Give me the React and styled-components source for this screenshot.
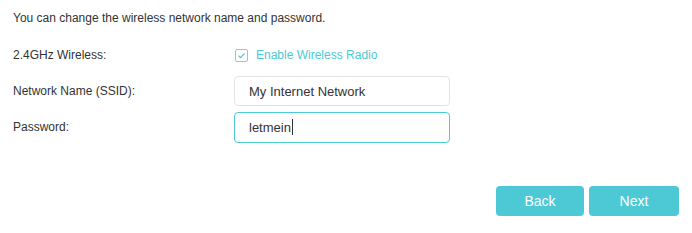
import React from "react";
import styled, { createGlobalStyle } from "styled-components";

const GlobalStyle = createGlobalStyle`
  html, body {
    margin: 0;
    padding: 0;
    background: #ffffff;
  }
  body {
    font-family: "Liberation Sans", Arial, sans-serif;
    color: #333333;
  }
`;

const Page = styled.div`
  width: 692px;
  height: 233px;
  box-sizing: border-box;
  padding: 11px 13px 0 13px;
`;

const Intro = styled.p`
  margin: 0;
  font-size: 12px;
  line-height: 14px;
  color: #333333;
`;

const Form = styled.div`
  margin-top: 15px;
  display: grid;
  grid-template-columns: 221px 216px;
  grid-auto-rows: 30px;
  row-gap: 6px;
  align-items: center;
`;

const Label = styled.label`
  font-size: 12px;
  color: #333333;
`;

const CheckRow = styled.label`
  display: flex;
  align-items: center;
  gap: 8px;
  margin-left: 1px;
  font-size: 12px;
  color: #4acbd6;
`;

const Box = styled.span`
  width: 11px;
  height: 11px;
  border: 1px solid #b8b8b8;
  border-radius: 2px;
  display: flex;
  align-items: center;
  justify-content: center;
`;

const Input = styled.div`
  box-sizing: border-box;
  height: ${(p) => (p.$focused ? "31px" : "30px")};
  border: 1px solid ${(p) => (p.$focused ? "#4acbd6" : "#e3e3e3")};
  border-radius: 4px;
  padding: 0 14px;
  display: flex;
  align-items: center;
  font-size: 13px;
  color: #333333;
`;

const Caret = styled.span`
  display: inline-block;
  width: 1px;
  height: 16px;
  background: #333333;
  margin-left: 1px;
`;

const Actions = styled.div`
  margin-top: 44px;
  display: flex;
  justify-content: flex-end;
  gap: 5px;
`;

const Button = styled.button`
  width: ${(p) => p.$w}px;
  height: 30px;
  border: none;
  border-radius: 4px;
  background: #4dc9d6;
  color: #ffffff;
  font-family: "Liberation Sans", Arial, sans-serif;
  font-size: 14px;
  cursor: pointer;
`;

export default function App() {
  return (
    <Page>
      <GlobalStyle />
      <Intro>You can change the wireless network name and password.</Intro>
      <Form>
        <Label>2.4GHz Wireless:</Label>
        <CheckRow>
          <Box>
            <svg width="9" height="9" viewBox="0 0 9 9">
              <path d="M1.5 4.6 L3.6 6.6 L7.5 2.4" fill="none" stroke="#4acbd6" strokeWidth="1.3" />
            </svg>
          </Box>
          Enable Wireless Radio
        </CheckRow>
        <Label>Network Name (SSID):</Label>
        <Input>My Internet Network</Input>
        <Label>Password:</Label>
        <Input $focused>
          letmein
          <Caret />
        </Input>
      </Form>
      <Actions>
        <Button $w={88}>Back</Button>
        <Button $w={90}>Next</Button>
      </Actions>
    </Page>
  );
}
